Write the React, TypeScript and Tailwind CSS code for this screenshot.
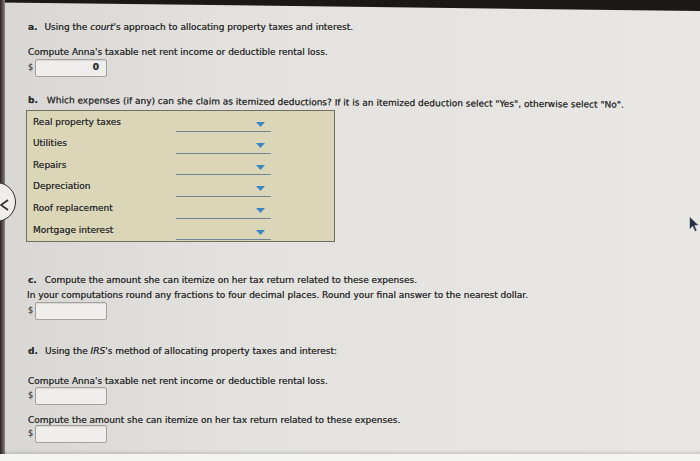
import React from "react";

const rows = [
  "Real property taxes",
  "Utilities",
  "Repairs",
  "Depreciation",
  "Roof replacement",
  "Mortgage interest",
];

function Arrow() {
  return (
    <svg width="9" height="5" viewBox="0 0 9 5">
      <polygon points="0,0 9,0 4.5,5" fill="#3a86c2" />
    </svg>
  );
}

function DollarBox({ value, width = "w-[72px]" }: { value?: string; width?: string }) {
  return (
    <div className="flex items-center h-[18px]">
      <span className="w-[7px] text-[8px] leading-none text-[#555]">$</span>
      <div
        className={`${width} h-[18px] rounded-[2px] border border-[#a3a29e] bg-[#efeeec] shadow-[inset_0_1px_1px_rgba(0,0,0,0.1)] flex items-center justify-end pr-[7px] text-[9px] font-bold text-[#333]`}
      >
        {value}
      </div>
    </div>
  );
}

export default function App() {
  return (
    <div className="relative w-[700px] h-[461px] overflow-hidden bg-[linear-gradient(90deg,#d8d7d3,#e3e2de_35%,#e8e7e3)] text-[#303030] font-['DejaVu_Sans',sans-serif] text-[9px] [text-shadow:0_0_0.4px_#444]">
      {/* monitor bezel */}
      <div className="absolute left-0 top-0 h-[11px] w-full bg-[#1c1817] [clip-path:polygon(0_0,100%_0,100%_100%,0_22%)]" />
      <div className="absolute left-0 top-0 h-full w-[5px] bg-gradient-to-r from-[#2b2320] to-[#8a8580]" />

      <div className="flex flex-col pl-[28px] pt-[21px]">
        <p className="leading-[12px]">
          <b className="mr-[7px]">a.</b>Using the <i>court</i>'s approach to allocating property taxes and interest.
        </p>
        <p className="mt-[13px] leading-[12px]">
          Compute Anna's taxable net rent income or deductible rental loss.
        </p>
        <div className="mt-[1px]">
          <DollarBox value="0" />
        </div>

        <p className="mt-[17px] leading-[12px] [transform:rotate(0.45deg)] origin-left">
          <b className="mr-[9px]">b.</b>Which expenses (if any) can she claim as itemized deductions? If it is an itemized deduction select "Yes", otherwise select "No".
        </p>

        <div className="mt-[4px] ml-[-2px] w-[309px] h-[132px] border border-[#6e6d66] bg-[#dad6b7] pt-[1px] pl-[6px]">
          {rows.map((r) => (
            <div key={r} className="flex h-[21.67px]">
              <div className="w-[143px] pt-[3.5px] leading-[12px]">{r}</div>
              <div className="w-[95px] h-[20px] border-b border-[#6f8799] flex justify-end pt-[9.5px] pr-[6px]">
                <Arrow />
              </div>
            </div>
          ))}
        </div>

        <p className="mt-[32px] leading-[12px]">
          <b className="mr-[8px]">c.</b>Compute the amount she can itemize on her tax return related to these expenses.
        </p>
        <p className="mt-[3px] ml-[-1px] leading-[12px]">
          In your computations round any fractions to four decimal places. Round your final answer to the nearest dollar.
        </p>
        <div className="mt-[1px]">
          <DollarBox />
        </div>

        <p className="mt-[25px] leading-[12px]">
          <b className="mr-[7px]">d.</b>Using the <i>IRS</i>'s method of allocating property taxes and interest:
        </p>
        <p className="mt-[18px] leading-[12px]">
          Compute Anna's taxable net rent income or deductible rental loss.
        </p>
        <div className="mt-0">
          <DollarBox />
        </div>
        <p className="mt-[9px] leading-[12px]">
          Compute the amount she can itemize on her tax return related to these expenses.
        </p>
        <div className="mt-[-1px]">
          <DollarBox />
        </div>
      </div>

      {/* bottom edge of the page */}
      <div className="absolute left-0 bottom-0 h-[7px] w-full bg-[#f4f4f2] shadow-[0_-2px_3px_rgba(0,0,0,0.12)]" />

      {/* previous-question button, cut by the screen edge */}
      <div className="absolute left-[-24px] top-[182px] w-[40px] h-[40px] rounded-full border-[1.5px] border-[#2b2b2b] bg-[#efeeea]" />
      <svg className="absolute left-0 top-[199px]" width="9" height="12" viewBox="0 0 9 12">
        <polyline points="8,1 1,6 8,11" fill="none" stroke="#2b2b2b" strokeWidth="1.6" />
      </svg>

      {/* mouse pointer */}
      <svg className="absolute left-[689px] top-[216px]" width="12" height="17" viewBox="0 0 12 17">
        <path d="M0.5 0.5 L0.5 13.5 L3.7 10.4 L6 15.5 L8 14.6 L5.8 9.6 L10 9.6 Z" fill="#2a2f48" stroke="#d8d8dc" strokeWidth="0.7" />
      </svg>
    </div>
  );
}
